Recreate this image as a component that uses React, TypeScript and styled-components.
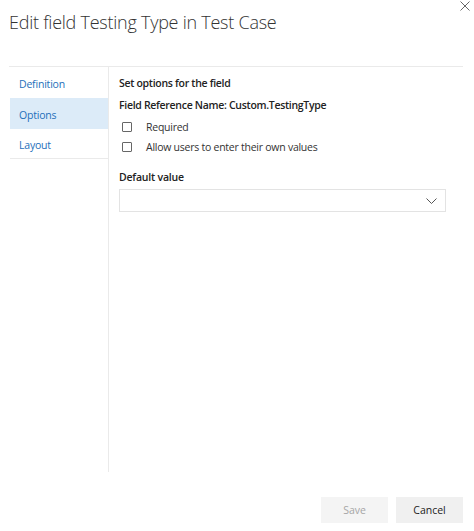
import React from "react";
import styled, { createGlobalStyle } from "styled-components";

const GlobalStyle = createGlobalStyle`
html, body {
margin: 0;
padding: 0;
background: #fff;
}
body {
font-family: "Open Sans", "Noto Sans", sans-serif;
color: #333;
}
`

const App = () => {
    return (
        <>
            <GlobalStyle />
            <Dialog>
                <Header>
                    <Title>Edit field Testing Type in Test Case</Title>
                    <Close aria-label="Close">
                        <svg width="10" height="10" viewBox="0 0 10 10">
                            <path d="M0.5 0.5 L9.5 9.5 M9.5 0.5 L0.5 9.5" stroke="#666" strokeWidth="1" fill="none" />
                        </svg>
                    </Close>
                </Header>
                <Body>
                    <Nav>
                        <NavItem>Definition</NavItem>
                        <NavItem active>Options</NavItem>
                        <NavItem last>Layout</NavItem>
                    </Nav>
                    <Content>
                        <Heading>Set options for the field</Heading>
                        <Heading>Field Reference Name: Custom.TestingType</Heading>
                        <CheckList>
                            <Check>
                                <Box />
                                <span>Required</span>
                            </Check>
                            <Check>
                                <Box />
                                <span>Allow users to enter their own values</span>
                            </Check>
                        </CheckList>
                        <Label>Default value</Label>
                        <Select>
                            <svg width="11" height="6" viewBox="0 0 11 6">
                                <path d="M0.5 0.5 L5.5 5.5 L10.5 0.5" stroke="#555" strokeWidth="1" fill="none" />
                            </svg>
                        </Select>
                    </Content>
                </Body>
                <Footer>
                    <Button disabled>Save</Button>
                    <Button>Cancel</Button>
                </Footer>
            </Dialog>
        </>
    )
}

const Dialog = styled.div`
width: 474px;
height: 531px;
display: flex;
flex-direction: column;
box-sizing: border-box;
padding: 0 10px 0 9px;
`
const Header = styled.div`
display: flex;
justify-content: space-between;
align-items: flex-start;
height: 66px;
border-bottom: 1px solid #eaeaea;
margin-right: 1px;
`
const Title = styled.h1`
margin: 9px 0 0;
font-weight: 300;
font-size: 18px;
letter-spacing: -0.25px;
line-height: 26px;
color: #333;
`
const Close = styled.div`
margin: 1px -7px 0 0;
width: 10px;
height: 10px;
display: flex;
`
const Body = styled.div`
display: flex;
height: 405px;
`
const Nav = styled.div`
width: 99px;
border-right: 1px solid #eaeaea;
`
const NavItem = styled.div<{ active?: boolean; last?: boolean }>`
height: ${p => p.last ? "30px" : "31px"};
display: flex;
align-items: center;
padding: 2px 0 0 9px;
box-sizing: border-box;
margin-left: 1px;
font-size: 10.5px;
letter-spacing: -0.2px;
color: #1e6fba;
background: ${p => p.active ? "#dcebf8" : "transparent"};
border-bottom: ${p => p.last ? "1px solid #eaeaea" : "none"};
`
const Content = styled.div`
flex: 1;
padding: 8px 0 0 10px;
display: flex;
flex-direction: column;
`
const Heading = styled.div`
font-size: 10.5px;
font-weight: 600;
letter-spacing: -0.3px;
color: #222;
line-height: 16px;
margin-bottom: 6px;
`
const CheckList = styled.div`
margin-top: -2px;
display: flex;
flex-direction: column;
`
const Check = styled.div`
display: flex;
align-items: center;
font-size: 10.5px;
letter-spacing: -0.25px;
color: #333;
height: 20px;
padding-left: 3px;
`
const Box = styled.span`
width: 8px;
height: 8px;
border: 1px solid #666;
border-radius: 1px;
margin-right: 14px;
`
const Label = styled.div`
font-size: 10.5px;
font-weight: 600;
letter-spacing: -0.2px;
color: #222;
margin-top: 12px;
line-height: 16px;
`
const Select = styled.div`
margin-top: 4px;
width: 327px;
height: 23px;
box-sizing: border-box;
border: 1px solid #e3e3e3;
display: flex;
align-items: center;
justify-content: flex-end;
padding-right: 8px;
`
const Footer = styled.div`
display: flex;
justify-content: flex-end;
gap: 8px;
padding-top: 25px;
margin-right: 1px;
`
const Button = styled.button`
width: 67px;
height: 26px;
border: none;
font-family: inherit;
font-size: 10.5px;
background: #f0f0f0;
color: #222;
&:disabled {
background: #f4f4f4;
color: #a6a6a6;
}
`
export default App
